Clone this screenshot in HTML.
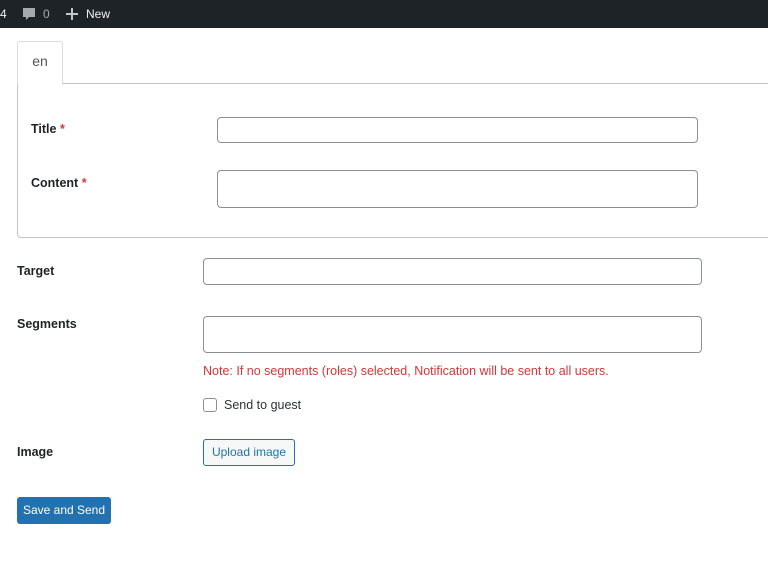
<!DOCTYPE html>
<html><head><style>
body{margin:0;width:768px;height:576px;background:#fff;font-family:"Liberation Sans",sans-serif;font-size:13px;color:#1d2327;position:relative;overflow:hidden}
.bar{position:absolute;left:0;top:0;width:768px;height:28px;background:#1d2327;color:#f0f0f1;font-size:12px}
.a{position:absolute}
.lbl{position:absolute;font-weight:bold;font-size:12.5px;color:#1d2327}
.star{color:#d63638}
.in{position:absolute;border:1px solid #8c8f94;border-radius:4px;background:#fff;box-sizing:border-box}
</style></head><body>
<div class="bar">
<span class="a" style="left:0;top:7px">4</span>
<svg class="a" style="left:22px;top:7px" width="14" height="14" viewBox="0 0 14 14"><path d="M1 1h12v9H7l-3 3v-3H1z" fill="#a7aaad"/></svg>
<span class="a" style="left:43px;top:7px;color:#a7aaad">0</span>
<svg class="a" style="left:66px;top:8px" width="12" height="12" viewBox="0 0 12 12"><path d="M5 0h2v5h5v2H7v5H5V7H0V5h5z" fill="#c3c4c7"/></svg>
<span class="a" style="left:86px;top:7px">New</span>
</div>
<div class="a" style="left:17px;top:41px;width:44px;height:43px;border:1px solid #dcdcde;border-bottom:none;border-radius:3px 3px 0 0;background:#fff;z-index:2;text-align:center;line-height:38px;font-size:14px;color:#50575e">en</div>
<div class="a" style="left:17px;top:83px;width:760px;height:155px;border:1px solid #c3c4c7;border-radius:4px;box-sizing:border-box"></div>
<div class="lbl" style="left:31px;top:122px">Title <span class="star">*</span></div>
<div class="in" style="left:217px;top:117px;width:481px;height:26px"></div>
<div class="lbl" style="left:31px;top:176px">Content <span class="star">*</span></div>
<div class="in" style="left:217px;top:170px;width:481px;height:38px"></div>
<div class="lbl" style="left:17px;top:264px">Target</div>
<div class="in" style="left:203px;top:258px;width:499px;height:27px"></div>
<div class="lbl" style="left:17px;top:317px">Segments</div>
<div class="in" style="left:203px;top:316px;width:499px;height:37px"></div>
<div class="a" style="left:203px;top:364px;color:#d63638;font-size:12.5px">Note: If no segments (roles) selected, Notification will be sent to all users.</div>
<div class="a" style="left:203px;top:398px;width:14px;height:14px;border:1px solid #8c8f94;border-radius:3px;box-sizing:border-box"></div>
<div class="a" style="left:224px;top:398px;font-size:12.5px;color:#2c3338">Send to guest</div>
<div class="lbl" style="left:17px;top:445px">Image</div>
<div class="a" style="left:203px;top:439px;width:92px;height:27px;border:1px solid #2271b1;border-radius:3px;background:#f6f7f7;color:#2271b1;box-sizing:border-box;font-size:12px;text-align:center;line-height:25px">Upload image</div>
<div class="a" style="left:17px;top:497px;width:94px;height:27px;background:#2271b1;border-radius:3px;color:#fff;font-size:12px;text-align:center;line-height:27px">Save and Send</div>
</body></html>
